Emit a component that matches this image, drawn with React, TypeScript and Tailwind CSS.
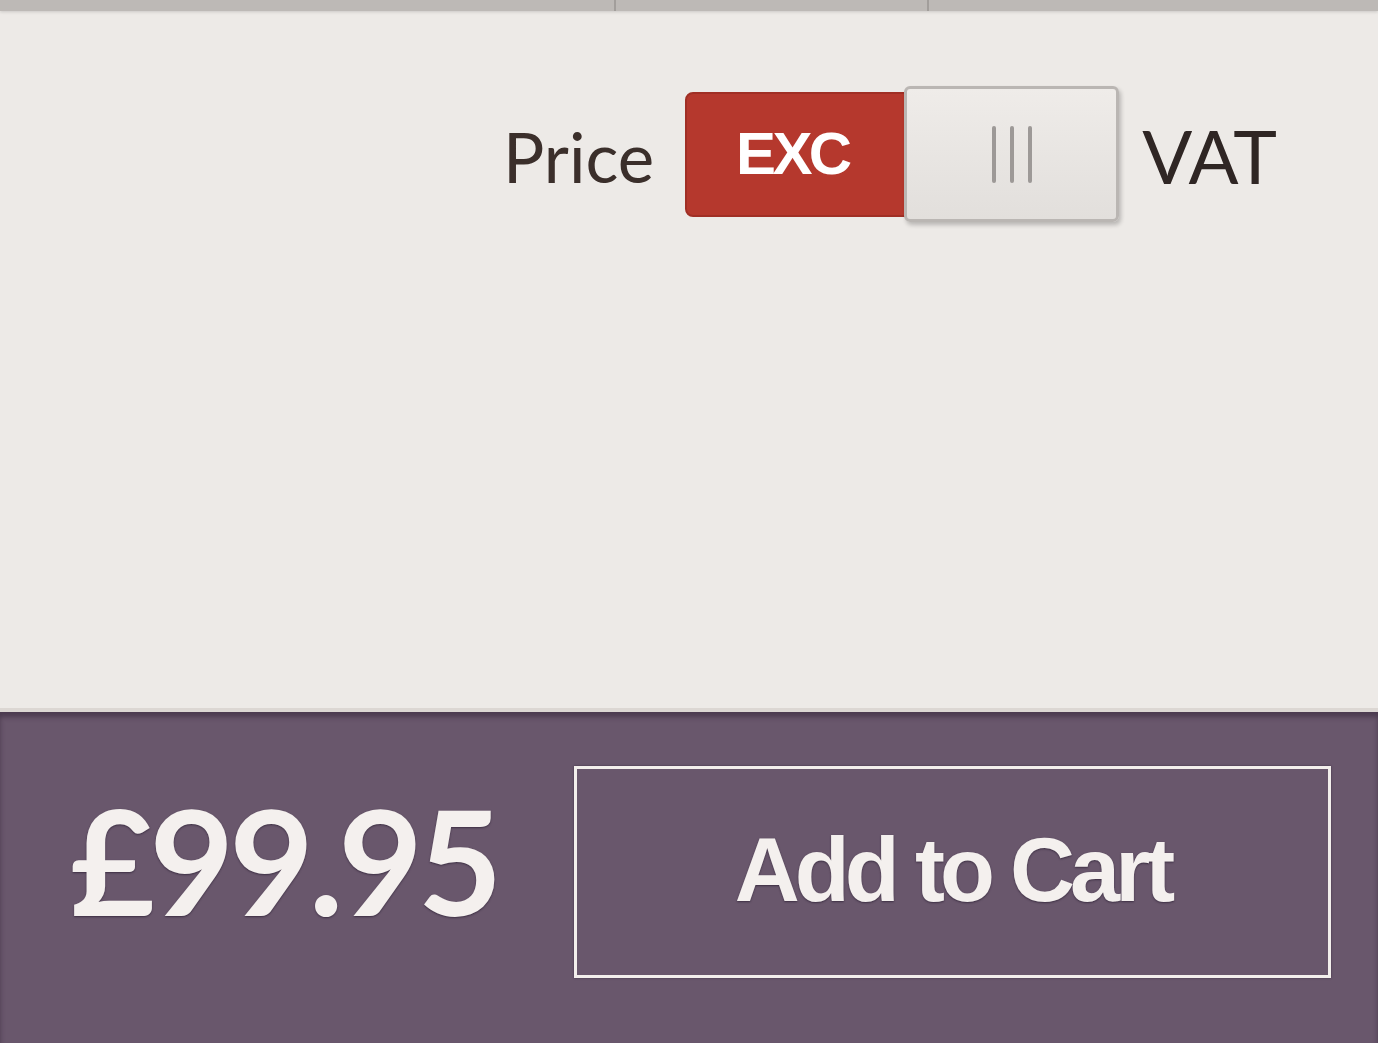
import React from "react";

export default function App() {
  return (
    <div className="w-[1378px] h-[1043px] flex flex-col bg-[#edeae7] overflow-hidden">
      {/* top strip */}
      <div className="h-[11px] bg-[#bdb9b6] flex items-stretch shadow-[0_1px_3px_rgba(0,0,0,0.15)]">
        <div className="ml-[614px] w-[2px] bg-[#a29e9b]" />
        <div className="ml-[311px] w-[2px] bg-[#a29e9b]" />
      </div>

      {/* content area */}
      <div className="flex-1 flex justify-end items-start pr-[101px] pt-[75px]">
        <div className="flex items-center">
          <span
            className="text-[69px] leading-none text-[#3b2f2b] mr-[31px] mt-[4px]"
            style={{ fontFamily: "Lato, 'Open Sans', sans-serif" }}
          >
            Price
          </span>
          <div className="flex items-center">
            <div className="w-[224px] h-[125px] bg-[#b5382d] rounded-l-[8px] border-2 border-[#a02f25] flex items-center justify-center">
              <span
                className="text-white text-[60px] font-bold leading-none tracking-[-0.06em] pr-[10px]"
                style={{ fontFamily: "'Liberation Sans', Arial, sans-serif" }}
              >
                EXC
              </span>
            </div>
            <div className="-ml-[5px] w-[215px] h-[136px] rounded-[6px] bg-gradient-to-b from-[#efece9] to-[#e2dfdc] border-[3px] border-[#bab6b3] shadow-[2px_3px_4px_rgba(0,0,0,0.22)] flex justify-center items-center gap-[14px]">
              <div className="w-[4px] h-[57px] bg-[#9d9997] rounded-full" />
              <div className="w-[4px] h-[57px] bg-[#9d9997] rounded-full" />
              <div className="w-[4px] h-[57px] bg-[#9d9997] rounded-full" />
            </div>
          </div>
          <span
            className="text-[74px] leading-none text-[#2f2624] ml-[23px] mt-[4px]"
            style={{ fontFamily: "Lato, 'Open Sans', sans-serif" }}
          >
            VAT
          </span>
        </div>
      </div>

      {/* divider line */}
      <div className="h-[4px] bg-[#dcd7d3]" />

      {/* bottom band */}
      <div className="h-[331px] bg-[#69576c] shadow-[inset_0_5px_5px_rgba(40,25,45,0.45)] flex items-start pl-[70px] pr-[47px] pt-[54px]">
        <span
          className="text-[#f4f0ee] text-[146px] font-bold leading-none tracking-[-0.035em] mt-[21px] [text-shadow:0_1px_2px_rgba(30,20,40,0.6)]"
          style={{ fontFamily: "Lato, 'Open Sans', sans-serif" }}
        >
          £99.95
        </span>
        <button className="ml-auto w-[757px] h-[212px] border-[3px] border-[#f3efec] flex items-center justify-center shadow-[0_0_2px_rgba(40,25,45,0.6)]">
          <span
            className="text-[#f4f0ee] text-[90px] font-bold leading-none tracking-[-0.055em] mb-[4px] [text-shadow:0_1px_2px_rgba(30,20,40,0.6)]"
            style={{ fontFamily: "'Liberation Sans', Arial, sans-serif" }}
          >
            Add to Cart
          </span>
        </button>
      </div>
    </div>
  );
}
